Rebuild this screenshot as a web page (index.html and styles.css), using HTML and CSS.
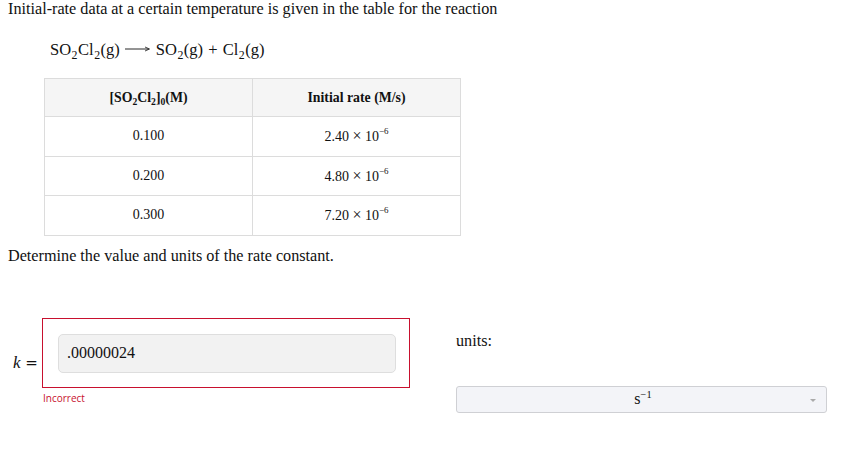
FILE: index.html
```html
<!DOCTYPE html>
<html>
<head>
<meta charset="utf-8">
<link rel="stylesheet" href="styles.css">
</head>
<body>
<p class="intro">Initial-rate data at a certain temperature is given in the table for the reaction</p>
<p class="equation">SO<sub>2</sub>Cl<sub>2</sub>(g)<svg class="arrow" width="25" height="8" viewBox="0 0 25 8"><path d="M0 4 H23.5" stroke="#111" stroke-width="0.9"/><path d="M20 2 L24.5 4 L20 6" fill="none" stroke="#111" stroke-width="0.8"/></svg>SO<sub>2</sub>(g) + Cl<sub>2</sub>(g)</p>
<table class="data">
  <thead>
    <tr><th>[SO<sub>2</sub>Cl<sub>2</sub>]<sub>0</sub>(M)</th><th>Initial rate (M/s)</th></tr>
  </thead>
  <tbody>
    <tr><td>0.100</td><td>2.40 <span class="times">×</span> 10<sup>−6</sup></td></tr>
    <tr><td>0.200</td><td>4.80 <span class="times">×</span> 10<sup>−6</sup></td></tr>
    <tr><td>0.300</td><td>7.20 <span class="times">×</span> 10<sup>−6</sup></td></tr>
  </tbody>
</table>
<p class="question">Determine the value and units of the rate constant.</p>
<div class="answer">
  <div class="k-part">
    <span class="k-label"><i>k</i> =</span>
    <div class="k-field">
      <div class="red-box">
        <div class="input">.00000024</div>
      </div>
      <div class="feedback">Incorrect</div>
    </div>
  </div>
  <div class="units-part">
    <div class="units-label">units:</div>
    <div class="select">
      <span class="sel-val">s<sup>−1</sup></span>
      <svg class="caret" width="6" height="3" viewBox="0 0 6 3"><path d="M0 0 L6 0 L3 3 Z" fill="#aaa"/></svg>
    </div>
  </div>
</div>
</body>
</html>
```
FILE: styles.css
```css
html, body {
  margin: 0;
  padding: 0;
  background: #fff;
}
body {
  font-family: "Liberation Serif", "Times New Roman", serif;
  font-size: 16.2px;
  color: #111;
  padding: 0 8px;
  width: 828px;
  height: 468px;
  overflow: hidden;
}
p { margin: 0; }
sub, sup { font-size: 70%; line-height: 0; }
sub { vertical-align: -0.35em; }
sup { vertical-align: 0.6em; }
.intro {
  line-height: 18px;
}
.equation {
  margin-top: 22px;
  margin-left: 42px;
  line-height: 20px;
  font-size: 16.5px;
  word-spacing: 1px;
}
.equation sub { font-size: 72%; margin: 0 0.5px; }
.arrow {
  margin: 0 6px 0 5px;
  vertical-align: 2px;
}
.data {
  margin-top: 18px;
  margin-left: 36px;
  border-collapse: collapse;
  width: 417px;
  font-size: 14px;
}
.data th, .data td {
  border: 1px solid #dcdcdc;
  text-align: center;
  padding: 0;
  width: 50%;
}
.data th {
  height: 37px;
  background: #f5f5f5;
  font-weight: bold;
  font-size: 13.8px;
}
.data td { height: 38.5px; }
.data td sup { font-size: 64%; vertical-align: 0.8em; }
.times { font-size: 16px; }
.question {
  margin-top: 10px;
  line-height: 20px;
}
.answer {
  display: flex;
  margin-top: 52px;
}
.k-part {
  display: flex;
  align-items: flex-start;
}
.k-label {
  font-family: "DejaVu Serif", serif;
  font-size: 15px;
  margin-top: 35px;
  margin-left: 5px;
  width: 29px;
  white-space: nowrap;
}
.k-label i { font-family: "Liberation Serif", serif; font-size: 17px; }
.red-box {
  width: 368px;
  height: 70px;
  border: 1px solid #c8102e;
  padding: 15px 13px 0 15px;
  box-sizing: border-box;
}
.input {
  height: 39px;
  box-sizing: border-box;
  background: #f2f2f2;
  border: 1px solid #dedede;
  border-radius: 5px;
  padding: 7px 8px;
  font-size: 16px;
  line-height: 22px;
}
.feedback {
  font-family: "Open Sans", sans-serif;
  font-size: 10px;
  color: #c8102e;
  margin-top: 3px;
  margin-left: 1px;
}
.units-part {
  margin-left: 46px;
  margin-top: 13px;
}
.units-label {
  line-height: 20px;
}
.select {
  margin-top: 35px;
  width: 371px;
  height: 27px;
  box-sizing: border-box;
  background: #f3f4f8;
  border: 1px solid #cfd0d4;
  border-radius: 3px;
  display: flex;
  align-items: center;
  justify-content: center;
  position: relative;
}
.sel-val { font-size: 16px; margin-left: 3px; }
.sel-val sup { font-size: 65%; vertical-align: 0.55em; }
.caret {
  position: absolute;
  right: 10px;
  top: 12px;
}
```
